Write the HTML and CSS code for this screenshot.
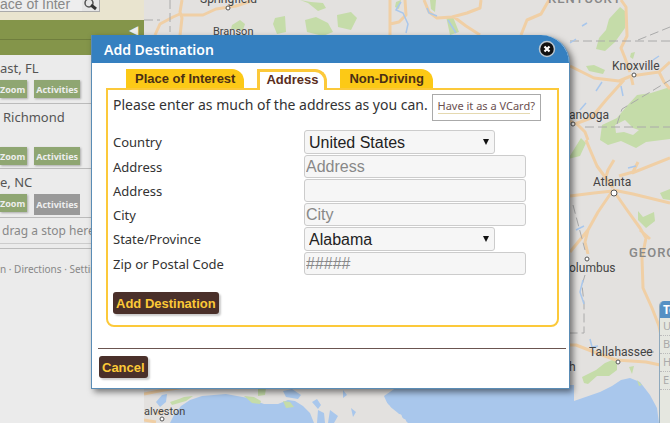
FILE: index.html
```html
<!DOCTYPE html>
<html lang="en">
<head>
  <meta charset="UTF-8">
  <meta name="viewport" content="width=device-width, initial-scale=1.0">
  <title>Add Destination</title>
  <link rel="stylesheet" href="styles.css">
</head>
<body>

<div class="page">
  <aside class="sidebar">
    <form class="search">
      <input type="text" value="ace of Inter" aria-label="Place of interest">
      <button type="button" aria-label="Search">
        <svg width="14" height="14" viewBox="0 0 14 14"><circle cx="5" cy="3" r="4" fill="none" stroke="#555" stroke-width="1.5"/><path d="M7 5l5 4" stroke="#333" stroke-width="3"/></svg>
      </button>
    </form>
    <div class="panel-bar"><button type="button" class="collapse" aria-label="Collapse">◀</button></div>
    <div class="panel-bar second"></div>

    <div class="stop">
      <p>ast, FL</p>
      <div class="actions">
        <button type="button">Zoom</button>
        <button type="button">Activities</button>
      </div>
    </div>
    <div class="stop tall">
      <p>Richmond</p>
      <div class="actions">
        <button type="button">Zoom</button>
        <button type="button">Activities</button>
      </div>
    </div>
    <div class="stop">
      <p>e, NC</p>
      <div class="actions">
        <button type="button">Zoom</button>
        <button type="button" class="off">Activities</button>
      </div>
    </div>
    <p class="hint">drag a stop here</p>
    <nav class="links"><a href="#">n</a> · <a href="#">Directions</a> · <a href="#">Settings</a></nav>
  </aside>

  <div class="map">
    <svg viewBox="144 0 526 423" preserveAspectRatio="xMinYMin slice">
      <rect x="144" width="526" height="423" fill="#e3e1df"/>
      <!-- gulf -->
      <g fill="#a9c7ec">
        <path d="M170 423l4-8 7-9 9-6 12-4 24-2 22 4 16 6 14 0 10-4 7 1 8 5 7 7 4 10zM400 385l-16 11 4 9 10 8 10 10h251l-2-15-7-13-10-13-10-4-9 2-9 6-12 6-26 9v-16z"/>
        <path d="M156 402l6-7 5-1-1 8-6 5zM283 391l9-2 9 6-3 4-12-2zM312 402l5-3 4 6-3 4zM318 410l6 3 1 10h-8zM330 410l8 6-4 7h-6zM343 390l4 5-4 3zM351 408l5 4-3 5z"/>
      </g>
      <g fill="#e3e1df">
        <circle cx="399" cy="417" r="3"/><circle cx="404" cy="421" r="2"/>
        <path d="M384 400l6 6 4 9-5 1-8-8z"/>
      </g>
      <!-- parks -->
      <g fill="#c5dca9">
        <path d="M232 25l8-5 5 4-2 6-12-1zM275 18l10-2 1 16-9 2-4-10zM305 20l11-3 12 6 5 9-10 4-16-4zM337 15l14-3 6 6-6 12-13-3zM396 2l5-2-2 9-4-2zM430 0h6l-1 12-4-3zM446 16l7 1 6 15-9 3zM300 0l8 3 10 8 8-3-3-5-12-1z"/>
        <path d="M620 7l6 5-1 16-10 14-10 9-9-2 3-11 7-8 3-11zM586 66l8-1 11 5-2 4-14-3zM631 53l4-1-2 7-3-2z"/>
        <path d="M670 87l-19 6-14 2-11 12-9 11-15 7-2 15 8 5 13-4 15 7 10-6 24-3zM581 138l5 5-6 13-12 3zM638 211l5 6 11-5 1 9-9 7-8-8zM660 193l10-4v11l-7-1z"/>
        <path d="M582 377l14-7 9-7 12-5v12l-8 6-12 0-9 8-4-1zM629 367l5-1-2 8zM637 380l5 5-3 1z"/>
        <path d="M170 402l9-3 5-2 9-1-7 5-14 4zM244 396l10 1 7 4-1 3-8-1zM258 388h8l-1 7-7 1zM283 401l7 1 4 5-8 1z"/>
      </g>
      <path d="M615 125l10-5 8 8 6 2-6 5-9-3-8 1z" fill="#e3e1df"/>
      <!-- roads -->
      <g fill="none" stroke="#f0cfa5" stroke-width="3" stroke-linejoin="round">
        <path d="M182 0l-2 12 2 6-4 35M155 35l5-11 13-7 9-4M180 15l23 0 13-6 20-3 15-5M390 0v35M390 24l9-2 7-7-1-15M424 0l5 12 8 6 15-1 15-4 13-5 1-8M454 17l12 9 14 9M521 35l6-15 14-6 8-14"/>
        <path d="M621 0l5 7 1 29-6 12 4 10 5 14M570 66l24 12 25 3 12-5 28-4 11-10M659 72l5 10 6 7M624 80l-18 20-15 18-16 6-5-3M576 123l9 9 3 8M631 76l2 9"/>
        <path d="M586 140l5 12 6 14 16 22M605 180l3-10 6-10M570 196l24-3 19-2M613 190l-15 22-10 18-18 22M588 230l-3 12 3 12M613 190l14 20 13 18 6 10-4 20 1 30 9 20 7 18 5 24M640 230l10 9M638 162l-5 10-14 4M632 173l38-15M613 190l20 4 37 9"/>
        <path d="M570 345h6l18 7 22 8 30 2 24 5M144 394l20-4 22-3M157 414l6-3M144 420l12 2"/>
      </g>
      <!-- state lines and rivers -->
      <g fill="none" stroke="#aaa" stroke-dasharray="9 4">
        <path d="M144 20h16M170 0v32M570 41h100M638 40l32-13M585 127h85M617 124l5-15 25-15 23-14M573 205l12 45M585 275l-3 10 2 18v30h-14M645 352h10"/>
      </g>
      <path d="M401 2l-5 8 7 3 5 11-2 9M427 8l2 5 8 3M448 20l8 13M596 91l6-9M580 110l6-7M621 86l2 10M628 168l8-2M576 230l8-4M583 280l-3 12 4 12M590 339l2 8 6-1M582 26l5-3M570 43l6-4M653 60l6-4" fill="none" stroke="#a9c7ec" stroke-width="1.5"/>
      <g fill="#fff" stroke="#555">
        <circle cx="228" cy="8" r="2"/><circle cx="634" cy="75" r="2"/><circle cx="573" cy="124" r="2"/>
        <circle cx="614" cy="193" r="3"/><circle cx="587" cy="259" r="2"/><circle cx="618" cy="362" r="2"/><circle cx="162" cy="419" r="2"/>
      </g>
      <g class="names">
        <text x="200" y="3">Springfield</text>
        <text x="213" y="35" class="small">Branson</text>
        <text x="548" y="3" class="state">KENTUCKY</text>
        <text x="612" y="70">Knoxville</text>
        <text x="569" y="119">anooga</text>
        <text x="593" y="186">Atlanta</text>
        <text x="569" y="272">olumbus</text>
        <text x="629" y="257" class="state">GEORGIA</text>
        <text x="589" y="356">Tallahassee</text>
        <text x="569" y="371">h</text>
        <text x="144" y="415" class="small">alveston</text>
      </g>
    </svg>
  </div>

  <section class="totals">
    <h3>Totals</h3>
    <p>U</p>
    <p>B</p>
    <p>H</p>
    <p>E</p>
  </section>
</div>

<div class="dialog" role="dialog" aria-labelledby="dialog-title">
  <div class="dialog-header">
    <h2 id="dialog-title">Add Destination</h2>
    <button type="button" class="close" aria-label="Close">
      <svg width="18" height="18" viewBox="0 0 18 18"><circle cx="9" cy="9" r="7.5" fill="#111" stroke="#b9c6d0" stroke-width="1.5"/><path d="M6.5 6.5l5 5M11.5 6.5l-5 5" stroke="#fff" stroke-width="2.2"/></svg>
    </button>
  </div>

  <div class="dialog-body">
    <div class="tabs">
      <button type="button" class="tab">Place of Interest</button>
      <button type="button" class="tab active">Address</button>
      <button type="button" class="tab">Non-Driving</button>
    </div>

    <form class="address-form">
      <div class="intro">
        <p>Please enter as much of the address as you can.</p>
        <div class="vcard"><a href="#">Have it as a VCard</a>?</div>
      </div>

      <div class="fields">
        <label for="country">Country</label>
        <div class="select"><select id="country"><option>United States</option></select></div>
        <label for="address1">Address</label>
        <input id="address1" type="text" placeholder="Address">
        <label for="address2">Address</label>
        <input id="address2" type="text">
        <label for="city">City</label>
        <input id="city" type="text" placeholder="City">
        <label for="state">State/Province</label>
        <div class="select"><select id="state"><option>Alabama</option></select></div>
        <label for="zip">Zip or Postal Code</label>
        <input id="zip" type="text" placeholder="#####">
      </div>

      <button type="button" class="btn">Add Destination</button>
    </form>
  </div>

  <div class="dialog-footer">
    <button type="button" class="btn">Cancel</button>
  </div>
</div>

</body>
</html>
```

FILE: styles.css
```css
* {
  box-sizing: border-box;
}

body {
  margin: 0;
  font-family: "Noto Sans", "Open Sans", sans-serif;
  font-size: 13px;
  color: #333;
}

h2, h3, p {
  margin: 0;
  font-weight: normal;
}

button {
  font-family: inherit;
  border: none;
  padding: 0;
  cursor: pointer;
}

.page {
  display: flex;
  height: 100vh;
  overflow: hidden;
  background-color: #ebebeb;
}

/* sidebar */

.sidebar {
  flex: 0 0 144px;
  overflow: hidden;
  white-space: nowrap;
  color: #555;
}

.search {
  display: flex;
  height: 20px;
  padding-bottom: 8px;
  background-color: #e9e4cf;
}

.search input {
  width: 82px;
  height: 12px;
  border: none;
  border-bottom: 1px solid #aaa;
  padding: 0 0 4px;
  background-color: #eee;
  color: #888;
  font: 14px "Liberation Sans", sans-serif;
}

.search button {
  width: 18px;
  height: 12px;
  overflow: hidden;
  border-right: 1px solid #aaa;
  border-bottom: 1px solid #aaa;
  background-color: #e6e6e6;
}

.panel-bar {
  display: flex;
  justify-content: flex-end;
  height: 19px;
  padding-right: 6px;
  background-color: #84954a;
}

.panel-bar.second {
  height: 16px;
  border-top: 1px solid #6f7e3d;
}

.collapse {
  background: none;
  color: #eee;
  font-size: 12px;
}

.stop {
  height: 49px;
  padding-top: 4px;
  border-bottom: 1px solid #bbb;
}

.stop.tall {
  height: 65px;
}

.stop p {
  height: 21px;
  line-height: 18px;
}

.stop.tall p {
  height: 39px;
  padding-left: 3px;
}

.actions {
  display: flex;
  gap: 7px;
}

.actions button {
  height: 18px;
  padding: 0 2px;
  background-color: #8fa672;
  box-shadow: 1px 1px 2px #aaa;
  color: #eee;
  font-size: 9px;
  font-weight: bold;
}

.actions button:first-child {
  padding-left: 0;
}

.actions .off {
  height: 21px;
  background-color: #999;
  box-shadow: none;
}

.hint {
  height: 26px;
  padding: 4px 2px;
  border-bottom: 1px solid #ccc;
  color: #888;
  font-size: 12px;
}

.links {
  margin-top: 4px;
  padding-top: 13px;
  border-top: 1px solid #bbb;
  color: #888;
  font-size: 10px;
}

.links a {
  color: #888;
  text-decoration: none;
}

/* map */

.map {
  flex: 1;
  overflow: hidden;
}

.map svg {
  display: block;
  width: 100%;
  height: 100%;
}

.names {
  font-family: Roboto, sans-serif;
  font-size: 12px;
  fill: #444;
}

.names .small {
  font-size: 11px;
}

.names .state {
  font-size: 13px;
  font-weight: 500;
  letter-spacing: 1px;
  fill: #888;
}

.totals {
  position: absolute;
  top: 301px;
  right: 0;
  width: 11px;
  height: 130px;
  overflow: hidden;
  border-left: 1px solid #8fa9bd;
  border-radius: 5px 0 0 0;
  background-color: #e5e7e0;
  color: #aaa;
}

.totals h3 {
  height: 17px;
  padding-left: 3px;
  background-color: #5590c4;
  color: #fff;
  font-size: 12px;
  font-weight: bold;
  line-height: 17px;
}

.totals p {
  height: 18px;
  padding-left: 3px;
  border-bottom: 1px dotted #bbb;
  font-size: 11px;
}

/* dialog */

.dialog {
  position: absolute;
  top: 35px;
  left: 91px;
  right: 100px;
  border: 1px solid #5a8cb5;
  border-top: none;
  border-radius: 0 28px 0 0;
  background-color: #fff;
  box-shadow: 3px 3px 6px rgba(0, 0, 0, 0.5);
}

.dialog-header {
  display: flex;
  justify-content: space-between;
  align-items: center;
  height: 28px;
  padding: 0 13px 0 12px;
  border-radius: 0 28px 0 0;
  background-color: #3580c0;
}

.dialog-header h2 {
  color: #fff;
  font-size: 14px;
  font-weight: 600;
}

.close {
  height: 18px;
  background: none;
}

.dialog-body {
  padding: 6px 10px 21px 14px;
}

.tabs {
  display: flex;
  gap: 13px;
  padding-left: 20px;
}

.tab {
  height: 19px;
  padding: 0 9px;
  border-radius: 0 12px 0 0;
  background-color: #fcc916;
  color: #4a2f14;
  font-family: "Liberation Sans", sans-serif;
  font-size: 14px;
  font-weight: bold;
}

.tab.active {
  height: 21px;
  margin-bottom: -2px;
  padding: 0 6px 4px;
  border: 3px solid #fcc93a;
  border-bottom: none;
  background-color: #fff;
  color: #5a2d20;
  z-index: 1;
}

.tabs .tab {
  font-size: 13px;
}

.address-form {
  padding: 4px 5px 11px;
  border: 2px solid #fcc93a;
  border-radius: 0 0 8px 8px;
}

.intro {
  display: flex;
  justify-content: space-between;
  padding-right: 11px;
  font-size: 14px;
  white-space: nowrap;
}

.intro p {
  line-height: 22px;
}

.vcard {
  height: 27px;
  padding: 2px 5px;
  border: 1px solid #aaa;
  color: #6b5050;
  font-size: 11px;
  line-height: 18px;
}

.vcard a {
  border-bottom: 1px solid #e5d9b0;
  color: #6b5050;
  text-decoration: none;
}

.fields {
  display: grid;
  grid-template-columns: 190px 1fr;
  gap: 1px;
  align-items: center;
  margin: 9px 0 17px;
}

.fields input,
.fields select {
  width: 222px;
  height: 23px;
  padding: 0 1px;
  border: 1px solid #ccc;
  border-radius: 3px;
  background-color: #f6f6f6;
  color: #222;
  font-family: "Liberation Sans", sans-serif;
  font-size: 16px;
}

.fields select {
  width: 191px;
  height: 24px;
  padding: 0 4px;
  appearance: none;
}

.select {
  display: grid;
  grid-template-columns: 191px;
  align-items: center;
}

.select select,
.select::after {
  grid-area: 1 / 1;
}

.select::after {
  content: "";
  justify-self: end;
  margin-right: 6px;
  border: 3px solid transparent;
  border-top: 6px solid #111;
  border-bottom: none;
  pointer-events: none;
}

.fields input::placeholder {
  color: #888;
}

.btn {
  height: 22px;
  padding: 0 3px;
  border-radius: 3px;
  background-color: #4a302a;
  box-shadow: 2px 2px 2px #ccc;
  color: #fcc937;
  font-family: "Liberation Sans", sans-serif;
  font-size: 13px;
  font-weight: bold;
}

.dialog-footer {
  margin: 0 3px 0 6px;
  padding: 7px 1px 10px;
  border-top: 1px solid #6b5550;
}
```
